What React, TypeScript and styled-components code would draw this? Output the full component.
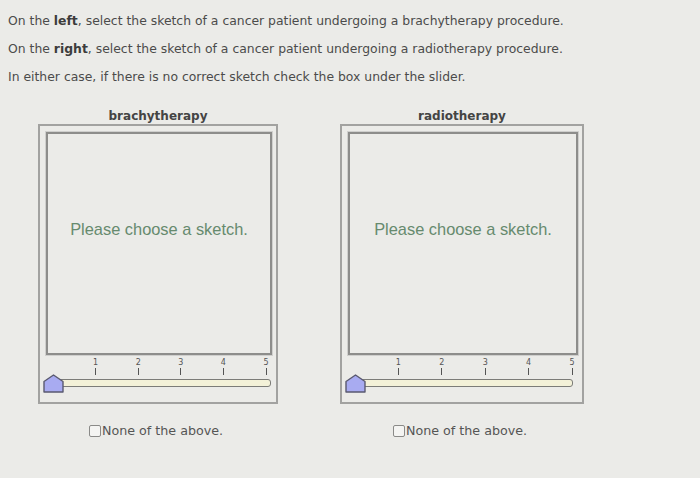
import React from "react";
import styled, { createGlobalStyle } from "styled-components";

const GlobalStyle = createGlobalStyle`
  html, body {
    margin: 0;
    padding: 0;
    background: #ebebe8;
  }
  body {
    font-family: "DejaVu Sans", Verdana, sans-serif;
    color: #4a4a4a;
  }
`;

const Page = styled.div`
  width: 700px;
  height: 478px;
  overflow: hidden;
  background: #ebebe8;
`;

const Instructions = styled.div`
  padding: 7px 0 0 8px;
  font-size: 12.4px;
  line-height: 28px;
  color: #4b4b4b;

  p {
    margin: 0;
  }
  b {
    font-weight: bold;
    color: #3c3c3c;
  }
`;

const Panels = styled.div`
  display: flex;
  gap: 62px;
  padding: 17px 0 0 38px;
`;

const Column = styled.div<{ $width: number }>`
  width: ${(p) => p.$width}px;
  display: flex;
  flex-direction: column;
  align-items: stretch;
`;

const Heading = styled.div`
  text-align: center;
  font-weight: bold;
  font-size: 12px;
  line-height: 16px;
  color: #444;
`;

const Frame = styled.div`
  border: 2px solid #a2a2a0;
  padding: 6px 4px 8px 6px;
  display: flex;
  flex-direction: column;
`;

const Sketch = styled.div`
  height: 223px;
  border: 2px solid #8d8d8b;
  box-shadow: 0 0 0 1px #cfcfcd;
  display: flex;
  justify-content: center;
  padding-top: 86px;
  box-sizing: border-box;
  font-family: "Liberation Sans", Arial, sans-serif;
  font-size: 16.4px;
  color: #668a6e;
`;

const Slider = styled.div`
  position: relative;
  height: 36px;
  margin: 3px 0 0 -3px;
  width: 230px;
`;

const Track = styled.div`
  position: absolute;
  left: 10px;
  right: 2px;
  top: 21px;
  height: 6px;
  background: #f3f1d8;
  border: 1px solid #7c7c78;
  border-radius: 0 3px 3px 0;
`;

const Tick = styled.div`
  position: absolute;
  top: 0;
  width: 10px;
  margin-left: -5px;
  display: flex;
  flex-direction: column;
  align-items: center;
  font-size: 8px;
  line-height: 9px;
  color: #555;

  &::after {
    content: "";
    display: block;
    width: 1px;
    height: 7px;
    margin-top: 1px;
    background: #555;
  }
`;

const Handle = styled.svg`
  position: absolute;
  left: 0;
  top: 16px;
  width: 21px;
  height: 19px;
`;

const NoneRow = styled.label`
  display: flex;
  align-items: center;
  justify-content: center;
  margin-top: 19px;
  padding-right: 4px;
  font-size: 12.7px;
  color: #555;
  gap: 1px;
`;

const Box = styled.span`
  width: 10px;
  height: 10px;
  border: 1px solid #8a8a88;
  border-radius: 2px;
  background: #f4f4f2;
`;

const ticks = [1, 2, 3, 4, 5];

function Panel({ title, width }: { title: string; width: number }) {
  const start = 10;
  const end = width - 17;
  const step = (end - start) / 5;
  return (
    <Column $width={width}>
      <Heading>{title}</Heading>
      <Frame>
        <Sketch>Please choose a sketch.</Sketch>
        <Slider>
          <Track />
          {ticks.map((t) => (
            <Tick key={t} style={{ left: start + step * t }}>
              {t}
            </Tick>
          ))}
          <Handle viewBox="0 0 21 19">
            <path
              d="M1 7.5 L10.5 1 L20 7.5 L20 18 L1 18 Z"
              fill="#a8abf1"
              stroke="#5a5a70"
              strokeWidth="1.4"
              strokeLinejoin="round"
            />
          </Handle>
        </Slider>
      </Frame>
      <NoneRow>
        <Box />
        None of the above.
      </NoneRow>
    </Column>
  );
}

export default function App() {
  return (
    <Page>
      <GlobalStyle />
      <Instructions>
        <p>
          On the <b>left</b>, select the sketch of a cancer patient undergoing a brachytherapy procedure.
        </p>
        <p>
          On the <b>right</b>, select the sketch of a cancer patient undergoing a radiotherapy procedure.
        </p>
        <p>In either case, if there is no correct sketch check the box under the slider.</p>
      </Instructions>
      <Panels>
        <Panel title="brachytherapy" width={240} />
        <Panel title="radiotherapy" width={244} />
      </Panels>
    </Page>
  );
}
